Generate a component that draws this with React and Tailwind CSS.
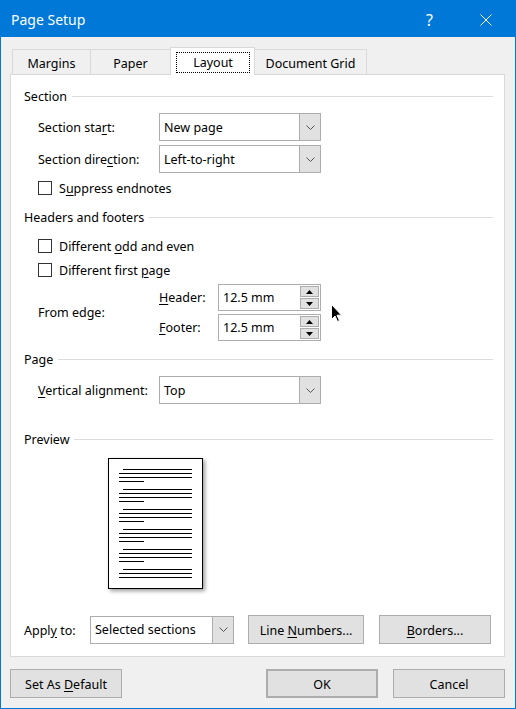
import React from "react";

const FONT = "font-['Noto_Sans',sans-serif]";

function Heading({children}) {
	return (
		<div className="flex items-center h-[16px] gap-[5px]">
			<span className="pt-[2px]">{children}</span>
			<div className="flex-1 h-px bg-[#dcdcdc]" />
		</div>
	);
}

function Chevron() {
	return (
		<svg width="9" height="5" viewBox="0 0 9 5">
			<path d="M0.5 0.5 L4.5 4.5 L8.5 0.5" fill="none" stroke="#555" strokeWidth="1" />
		</svg>
	);
}

function Select({value, className}) {
	return (
		<div className={`flex h-[28px] border border-[#adadad] bg-white ${className}`}>
			<div className="flex-1 flex items-center pl-[4px] pt-[2px]">{value}</div>
			<div className="w-[21px] border-l border-[#adadad] bg-[#e1e1e1] flex items-center justify-center">
				<Chevron />
			</div>
		</div>
	);
}

function Checkbox({children}) {
	return (
		<div className="flex items-center h-[20px] ml-[14px] gap-[7px]">
			<div className="w-[14px] h-[14px] border border-[#333] bg-white" />
			<span className="pt-[2px]">{children}</span>
		</div>
	);
}

function Spinner({value}) {
	return (
		<div className="flex items-center h-[27px] w-[103px] border border-[#adadad] bg-white pr-px">
			<div className="flex-1 pl-[4px] pt-[2px]">{value}</div>
			<div className="flex flex-col gap-px">
				<div className="w-[19px] h-[11px] bg-[#e1e1e1] border border-[#adadad] flex items-center justify-center">
					<svg width="7" height="4" viewBox="0 0 7 4"><path d="M3.5 0 L7 4 L0 4 Z" fill="#000" /></svg>
				</div>
				<div className="w-[19px] h-[11px] bg-[#e1e1e1] border border-[#adadad] flex items-center justify-center">
					<svg width="7" height="4" viewBox="0 0 7 4"><path d="M0 0 L7 0 L3.5 4 Z" fill="#000" /></svg>
				</div>
			</div>
		</div>
	);
}

function Btn({children, className = ""}) {
	return (
		<div className={`h-[29px] bg-[#e1e1e1] border border-[#adadad] flex items-center justify-center ${className}`}>
			<span className="pt-[3px]">{children}</span>
		</div>
	);
}

function Preview() {
	const lines = [];
	for (let g = 0; g < 6; g++) {
		const y0 = 10 + g * 20;
		lines.push(<rect key={`${g}a`} x="14" y={y0} width="69" height="1" />);
		lines.push(<rect key={`${g}b`} x="10" y={y0 + 4} width="73" height="1" />);
		lines.push(<rect key={`${g}c`} x="10" y={y0 + 8} width="73" height="1" />);
		if (g < 5) lines.push(<rect key={`${g}d`} x="10" y={y0 + 12} width="25" height="1" />);
	}
	return (
		<div className="ml-[84px] mt-[11px] w-[95px] h-[131px] border border-black bg-white shadow-[2px_2px_4px_rgba(0,0,0,0.4)]">
			<svg width="93" height="129" viewBox="0 0 93 129" fill="#000">
				{lines}
			</svg>
		</div>
	);
}

const U = ({children}) => <span className="underline underline-offset-2">{children}</span>;

export default function App() {
	return (
		<div className={`${FONT} relative w-[516px] h-[709px] bg-[#f0f0f0] border-x border-b border-[#0078d7] flex flex-col text-[12.5px] text-black leading-none`}>
			{/* title bar */}
			<div className="h-[37px] bg-[#0078d7] flex items-center pl-[10px] text-white shrink-0">
				<span className="text-[14px] pt-[3px]">Page Setup</span>
				<span className="ml-auto text-[16px] pt-[3px]">?</span>
				<svg className="ml-[47px] mr-[23px] mt-[2px]" width="12" height="12" viewBox="0 0 12 12">
					<path d="M0.5 0.5 L11.5 11.5 M11.5 0.5 L0.5 11.5" stroke="#fff" strokeWidth="1" />
				</svg>
			</div>

			{/* tabs */}
			<div className="mt-[10px] h-[27px] pl-[11px] flex items-end shrink-0">
				<div className="w-[79px] h-[25px] border border-b-0 border-[#d9d9d9] flex items-center justify-center pt-[4px]">Margins</div>
				<div className="-ml-px w-[81px] h-[25px] border border-b-0 border-[#d9d9d9] flex items-center justify-center pt-[4px]">Paper</div>
				<div className="-ml-px w-[85px] h-[28px] -mb-px relative z-10 bg-white border border-b-0 border-[#d9d9d9] pl-[5px] pt-[4px]">
					<div className="w-[74px] h-[21px] border border-dotted border-black flex items-center justify-center pt-[2px]">Layout</div>
				</div>
				<div className="-ml-px w-[113px] h-[25px] border border-b-0 border-[#d9d9d9] flex items-center justify-center pt-[4px]">Document Grid</div>
			</div>

			{/* panel */}
			<div className="ml-[9px] w-[495px] h-[583px] bg-white border border-[#d9d9d9] pl-[13px] pr-[11px] flex flex-col shrink-0">
				<div className="mt-[13px]">
					<Heading>Section</Heading>
				</div>
				<div className="mt-[9px] ml-[14px] flex items-center">
					<span className="w-[121px] pt-[2px]">Section sta<U>r</U>t:</span>
					<Select value="New page" className="w-[162px]" />
				</div>
				<div className="mt-[4px] ml-[14px] flex items-center">
					<span className="w-[121px] pt-[2px]">Section dire<U>c</U>tion:</span>
					<Select value="Left-to-right" className="w-[162px]" />
				</div>
				<div className="mt-[5px]">
					<Checkbox>
						S<U>u</U>ppress endnotes
					</Checkbox>
				</div>

				<div className="mt-[11px]">
					<Heading>Headers and footers</Heading>
				</div>
				<div className="mt-[11px]">
					<Checkbox>
						Different <U>o</U>dd and even
					</Checkbox>
				</div>
				<div className="mt-[4px]">
					<Checkbox>
						Different first <U>p</U>age
					</Checkbox>
				</div>
				<div className="mt-[4px] ml-[14px] flex items-center">
					<span className="w-[121px] pt-[2px]">From edge:</span>
					<div className="flex flex-col gap-[3px]">
						<div className="flex items-center">
							<span className="w-[59px] pt-[2px]">
								<U>H</U>eader:
							</span>
							<Spinner value="12.5 mm" />
						</div>
						<div className="flex items-center">
							<span className="w-[59px] pt-[2px]">
								<U>F</U>ooter:
							</span>
							<Spinner value="12.5 mm" />
						</div>
					</div>
				</div>

				<div className="mt-[10px]">
					<Heading>Page</Heading>
				</div>
				<div className="mt-[9px] ml-[14px] flex items-center">
					<span className="w-[121px] pt-[2px]">
						<U>V</U>ertical alignment:
					</span>
					<Select value="Top" className="w-[162px]" />
				</div>

				<div className="mt-[27px]">
					<Heading>Preview</Heading>
				</div>
				<Preview />

				<div className="mt-[26px] flex items-center">
					<span className="w-[66px] pt-[3px]">
						Appl<U>y</U> to:
					</span>
					<Select value="Selected sections" className="w-[144px]" />
					<Btn className="ml-[14px] w-[116px]">
						Line <U>N</U>umbers...
					</Btn>
					<Btn className="ml-[15px] w-[112px]">
						<U>B</U>orders...
					</Btn>
				</div>
			</div>

			{/* bottom buttons */}
			<div className="mt-[12px] flex items-center">
				<Btn className="ml-[9px] w-[112px]">
					Set As <U>D</U>efault
				</Btn>
				<Btn className="ml-auto w-[112px] border-2 border-[#0078d7]">OK</Btn>
				<Btn className="ml-[15px] mr-[10px] w-[112px]">Cancel</Btn>
			</div>

			{/* mouse pointer */}
			<svg className="absolute left-[330px] top-[304px]" width="12" height="19" viewBox="0 0 12 19">
				<path d="M0.5 0.5 L0.5 15.5 L4 12 L6.5 17.5 L8.5 16.5 L6 11.2 L10.5 11.2 Z" fill="#000" stroke="#fff" strokeWidth="1" />
			</svg>
		</div>
	);
}
